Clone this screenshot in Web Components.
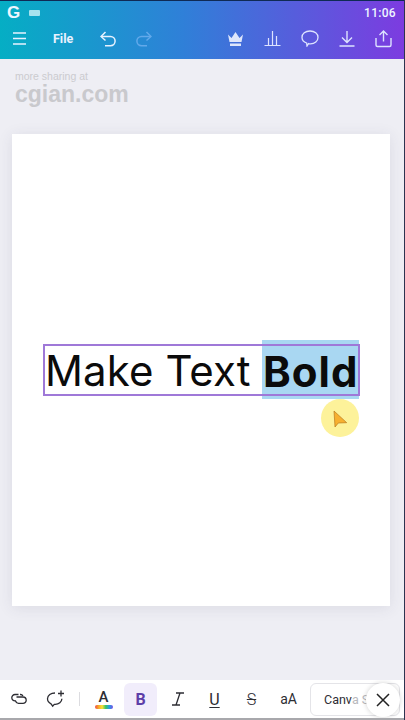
<!DOCTYPE html>
<html>
<head>
<meta charset="utf-8">
<style>
    html, body { margin: 0; padding: 0; height: 100%; }
    body { width: 405px; height: 720px; overflow: hidden; font-family: Roboto, "Liberation Sans", sans-serif; }
    editor-app { height: 720px; }
</style>
</head>
<body>
<editor-app></editor-app>
<script>
const ICONS = {
    menu: '<path d="M0 1h13M0 6.500h13M0 12h13" />',
    undo: '<path d="M5.500 1 1 5.500 5.500 9.500" /><path d="M1.500 5.500h9a4.600 4.600 0 0 1 0 9.200H5" />',
    redo: '<path d="M10.500 1 15 5.500 10.500 9.500" /><path d="M14.500 5.500h-9a4.600 4.600 0 0 0 0 9.200H11" />',
    chart: '<path d="M.5 15.500h16M4.500 15.500V8M8.500 15.500V1M12.500 15.500V6" />',
    bubble: '<path d="M9 1c4.700 0 8 2.800 8 6.400s-3.300 6.400-7.500 6.400c-.7 0-1.300 0-2-.2L6 16l-.4-3C3 12 1 10 1 7.400 1 3.800 4.300 1 9 1z" />',
    download: '<path d="M8 1v11M3 7.500 8 12.500l5-5M.5 16h15" />',
    share: '<path d="M8.500 11.500V1.200M4.500 5 8.500 1l4 4" /><path d="M1 8v7a1.500 1.500 0 0 0 1.500 1.500h12A1.500 1.500 0 0 0 16 15V8" />',
    link: '<path d="M8.500 4.500H5a3.200 3.200 0 0 0 0 6.400h1" /><path d="M6.500 7h6.500a3.200 3.200 0 0 1 0 6.400H8.500A3.200 3.200 0 0 1 5.600 11" /><path d="M10 4.500h.5A3.200 3.200 0 0 1 13 6" />',
    comment: '<path d="M9 3C5 3 1.500 5.300 1.500 8.800c0 2.200 1.300 4 3.500 5l1.700 2.400 1.600-1.800h1c3.500 0 6.400-2.300 6.600-5.600" /><path d="M15 .5v6M12 3.500h6" />',
    italic: '<path d="M7 3h8M3 15h8M11 3 7 15" />',
    close: '<path d="M2 2l12 12M14 2 2 14" />'
};

class AppIcon extends HTMLElement {
    connectedCallback() {
        const name = this.getAttribute('name');
        const w = this.getAttribute('w') || 18;
        const h = this.getAttribute('h') || w;
        const sw = this.getAttribute('stroke') || 1.5;
        this.attachShadow({ mode: 'open' }).innerHTML = `
            <style>
                :host { display: inline-flex; }
                svg { display: block; fill: none; stroke: currentColor; stroke-width: ${sw}; }
            </style>
            <svg width="${w}" height="${h}" viewBox="0 0 ${w} ${h}">${ICONS[name]}</svg>
        `;
    }
}

class StatusBar extends HTMLElement {
    connectedCallback() {
        this.attachShadow({ mode: 'open' }).innerHTML = `
            <style>
                :host { display: flex; align-items: center; height: 23px; padding: 0 9px 0 7px; color: #eef6ff; }
                .g { font: 700 17px "Liberation Sans", sans-serif; width: 14px; margin-right: 8px; }
                .keys { width: 11px; height: 6px; border-radius: 1px; background: #a6e2ee; }
                .time { margin-left: auto; font: 500 12px Roboto, sans-serif; letter-spacing: .3px; }
            </style>
            <span class="g">G</span>
            <span class="keys"></span>
            <span class="time">11:06</span>
        `;
    }
}

class TopBar extends HTMLElement {
    connectedCallback() {
        this.attachShadow({ mode: 'open' }).innerHTML = `
            <style>
                :host {
                    display: block; height: 59px; box-sizing: border-box;
                    background: linear-gradient(90deg, #05aec4 0%, #2f80d8 45%, #7d3be0 100%);
                    border-top: 1px solid #0f2a55;
                }
                .tools { display: flex; align-items: center; height: 29px; padding: 0 13px; color: #e8f2ff; }
                .file { font: 700 12.500px Roboto, sans-serif; margin-left: 27px; }
                .undo { margin-left: 27px; }
                .redo { margin-left: 20px; color: #62a9ea; }
                .right { margin-left: auto; display: flex; align-items: center; gap: 20px; color: #dde3ff; }
                svg.crown { display: block; fill: #dde6fb; }
            </style>
            <slot name="status"></slot>
            <div class="tools">
                <app-icon name="menu" w="13" h="13"></app-icon>
                <span class="file">File</span>
                <app-icon class="undo" name="undo" w="16" h="16"></app-icon>
                <app-icon class="redo" name="redo" w="16" h="16"></app-icon>
                <div class="right">
                    <svg class="crown" width="17" height="16" viewBox="0 0 17 16"><path d="M1 3.500 4.500 7 8.500 1l4 6L16 3.500 14.500 11h-12zM3 12.500h11V15H3z"/></svg>
                    <app-icon name="chart" w="17" h="17" stroke="1.200"></app-icon>
                    <app-icon name="bubble" w="18" h="17" stroke="1.300"></app-icon>
                    <app-icon name="download" w="16" h="17" stroke="1.400"></app-icon>
                    <app-icon name="share" w="17" h="18" stroke="1.400"></app-icon>
                </div>
            </div>
        `;
    }
}

class Watermark extends HTMLElement {
    connectedCallback() {
        this.attachShadow({ mode: 'open' }).innerHTML = `
            <style>
                :host { position: absolute; left: 15px; top: 70px; color: #c9c9cd; font-family: "Liberation Sans", Arial, sans-serif; }
                .small { font-size: 10.500px; line-height: 12px; color: #cbcbcf; }
                .big { font-size: 23px; font-weight: 700; line-height: 24px; }
            </style>
            <div class="small">more sharing at</div>
            <div class="big">cgian.com</div>
        `;
    }
}

class TextBox extends HTMLElement {
    connectedCallback() {
        this.attachShadow({ mode: 'open' }).innerHTML = `
            <style>
                :host {
                    display: flex; align-items: center; box-sizing: border-box; position: relative;
                    width: 317px; height: 52px; margin-left: 31px; padding: 2px 0 0 2px;
                    font: 400 42px/1 Inter, "Liberation Sans", sans-serif; color: #0b0b0b; white-space: nowrap;
                }
                :host::after {
                    content: ""; position: absolute; inset: 0; box-sizing: border-box;
                    border: 2px solid #9f78d8; pointer-events: none;
                }
                .plain { position: relative; letter-spacing: .1px; }
                .sel {
                    position: absolute; left: 219px; top: -4px; width: 97px; height: 59px;
                    background: #a9d7f2;
                }
                .bold { position: absolute; left: 220px; top: 7px; font-weight: 700; letter-spacing: 1px; }
            </style>
            <span class="sel"></span>
            <span class="plain">Make Text</span>
            <span class="bold">Bold</span>
        `;
    }
}

class DesignPage extends HTMLElement {
    connectedCallback() {
        this.attachShadow({ mode: 'open' }).innerHTML = `
            <style>
                :host {
                    display: flex; flex-direction: column; justify-content: center; box-sizing: border-box;
                    width: 378px; height: 472px; margin: 75px 0 0 12px; background: #fff;
                    box-shadow: 0 2px 14px rgba(60, 60, 90, .10); position: relative;
                }
            </style>
            <slot></slot>
        `;
    }
}

class TapMarker extends HTMLElement {
    connectedCallback() {
        this.attachShadow({ mode: 'open' }).innerHTML = `
            <style>
                :host {
                    position: absolute; left: 321px; top: 399px; width: 38px; height: 38px; border-radius: 50%;
                    background: #fdf29a; display: flex; align-items: center; justify-content: center;
                }
                svg { display: block; }
            </style>
            <svg width="16" height="18" viewBox="0 0 16 18"><path d="M2 2 14.700 13.700 6.300 14 3 18z" fill="#f7b030" stroke="#b87a1e" stroke-width=".7"/></svg>
        `;
    }
}

class ToolBar extends HTMLElement {
    connectedCallback() {
        this.attachShadow({ mode: 'open' }).innerHTML = `
            <style>
                :host {
                    position: absolute; left: 0; bottom: 0; width: 405px; height: 40px;
                    background: #fff; display: flex; align-items: center; color: #2d2d33;
                    box-sizing: border-box; border-bottom: 2px solid #a8a8ac; overflow: hidden;
                }
                .cell { display: flex; align-items: center; justify-content: center; flex: none; width: 37px; height: 33px; }
                .div { width: 1px; height: 14px; background: #dcdce0; margin: 0 5px 0 5px; flex: none; }
                .color { flex-direction: column; font: 500 15px/14px Roboto, sans-serif; }
                .rainbow { width: 18px; height: 4px; border-radius: 2px; background: linear-gradient(90deg, #ef4a4a, #f7a928, #f5e23b, #35c46a, #2b9be8, #7a4be0); margin-top: 1px; }
                .bold { position: relative; font: 700 16px Roboto, sans-serif; color: #5d3ea8; }
                .bold span { display: flex; align-items: center; justify-content: center; width: 33px; height: 33px; border-radius: 6px; background: #f1edfb; }
                .u { font: 400 16px Roboto, sans-serif; text-decoration: underline; text-underline-offset: 2px; }
                .s { font: 300 16px Roboto, sans-serif; text-decoration: line-through; }
                .aa { font: 400 14px Roboto, sans-serif; }
                .font {
                    width: 90px; height: 33px; margin-left: 3px; box-sizing: border-box; flex: none;
                    border: 1px solid #e4e4e8; border-radius: 6px; font: 400 12.500px Roboto, sans-serif;
                    display: flex; align-items: center; padding-left: 13px; white-space: nowrap; overflow: hidden;
                }
                .fade { color: #b8b8bc; }
                .close {
                    position: absolute; right: 5px; top: 3px; width: 34px; height: 34px; border-radius: 50%;
                    background: #fff; box-shadow: 0 0 5px rgba(0,0,0,.18); color: #222;
                    display: flex; align-items: center; justify-content: center;
                }
            </style>
            <div class="cell"><app-icon name="link" w="18" h="18" stroke="1.300"></app-icon></div>
            <div class="cell"><app-icon name="comment" w="19" h="19" stroke="1.300"></app-icon></div>
            <span class="div"></span>
            <div class="cell color"><span>A</span><span class="rainbow"></span></div>
            <div class="cell bold"><span>B</span></div>
            <div class="cell"><app-icon name="italic" w="18" h="18" stroke="1.300"></app-icon></div>
            <div class="cell u">U</div>
            <div class="cell s">S</div>
            <div class="cell aa">aA</div>
            <div class="font">Canv<span class="fade">a S</span></div>
            <div class="close"><app-icon name="close" w="16" h="16" stroke="1.500"></app-icon></div>
        `;
    }
}

class EditorApp extends HTMLElement {
    connectedCallback() {
        this.attachShadow({ mode: 'open' }).innerHTML = `
            <style>
                :host { display: block; position: relative; width: 405px; height: 720px; background: #eeeef4; overflow: hidden; }
                .edge { position: absolute; right: 0; top: 0; bottom: 0; width: 1px; background: #2c3350; }
            </style>
            <top-bar><status-bar slot="status"></status-bar></top-bar>
            <water-mark></water-mark>
            <design-page><text-box></text-box></design-page>
            <tap-marker></tap-marker>
            <tool-bar></tool-bar>
            <div class="edge"></div>
        `;
    }
}

customElements.define('app-icon', AppIcon);
customElements.define('status-bar', StatusBar);
customElements.define('top-bar', TopBar);
customElements.define('water-mark', Watermark);
customElements.define('text-box', TextBox);
customElements.define('design-page', DesignPage);
customElements.define('tap-marker', TapMarker);
customElements.define('tool-bar', ToolBar);
customElements.define('editor-app', EditorApp);
</script>
</body>
</html>
